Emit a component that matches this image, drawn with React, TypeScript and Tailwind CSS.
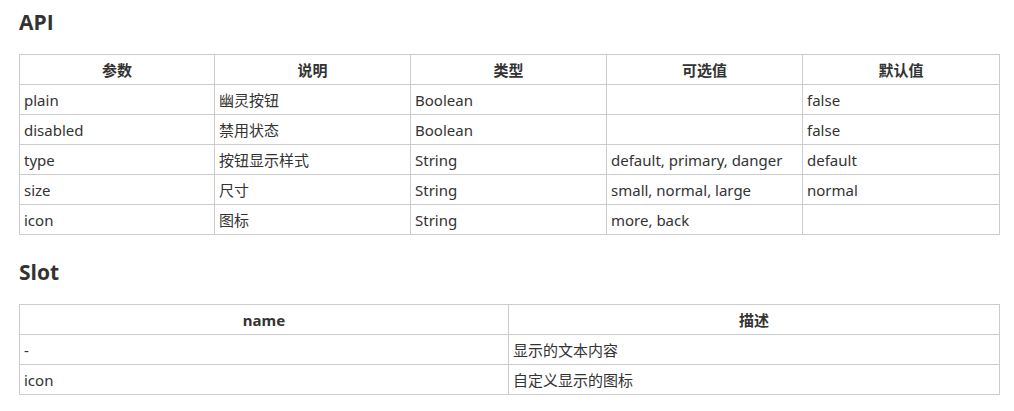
import React from "react";

const font = { fontFamily: '"Noto Sans", "Noto Sans CJK SC", sans-serif' };

function Table({ head, rows, widths }: { head: string[]; rows: string[][]; widths: string[] }) {
  return (
    <table className="w-[980px] border-collapse table-fixed text-[15px] text-[#333]">
      <colgroup>
        {widths.map((w, i) => (
          <col key={i} style={{ width: w }} />
        ))}
      </colgroup>
      <thead>
        <tr className="h-[30px]">
          {head.map((h, i) => (
            <th key={i} className="border border-[#ccc] font-bold text-center px-[4px] py-0 leading-[20px]">
              {h}
            </th>
          ))}
        </tr>
      </thead>
      <tbody>
        {rows.map((r, i) => (
          <tr key={i} className="h-[30px]">
            {r.map((c, j) => (
              <td key={j} className="border border-[#ccc] px-[4px] py-0 leading-[20px] whitespace-nowrap">
                {c}
              </td>
            ))}
          </tr>
        ))}
      </tbody>
    </table>
  );
}

export default function App() {
  const hFont = { fontFamily: '"Open Sans", "Noto Sans CJK SC", sans-serif' };
  return (
    <div className="bg-white w-[1014px] h-[411px] px-[19px] pt-[6px]" style={font}>
      <h2 className="text-[21px] font-bold text-[#333] leading-[32px] mb-[16px]" style={hFont}>
        API
      </h2>
      <Table
        widths={["195px", "196px", "196px", "196px", "197px"]}
        head={["参数", "说明", "类型", "可选值", "默认值"]}
        rows={[
          ["plain", "幽灵按钮", "Boolean", "", "false"],
          ["disabled", "禁用状态", "Boolean", "", "false"],
          ["type", "按钮显示样式", "String", "default, primary, danger", "default"],
          ["size", "尺寸", "String", "small, normal, large", "normal"],
          ["icon", "图标", "String", "more, back", ""],
        ]}
      />
      <h2 className="text-[21px] font-bold text-[#333] leading-[32px] mt-[21px] mb-[16px]" style={hFont}>
        Slot
      </h2>
      <Table
        widths={["489px", "491px"]}
        head={["name", "描述"]}
        rows={[
          ["-", "显示的文本内容"],
          ["icon", "自定义显示的图标"],
        ]}
      />
    </div>
  );
}
